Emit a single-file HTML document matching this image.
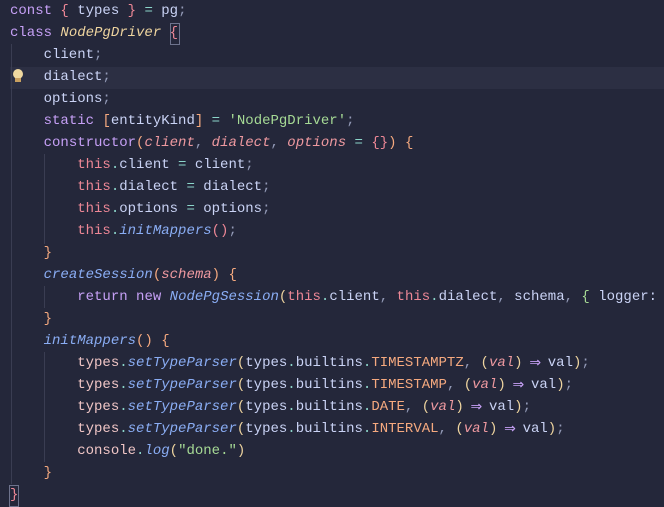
<!DOCTYPE html>
<html><head><meta charset="utf-8"><style>
html,body{margin:0;padding:0;background:#24273a;width:664px;height:507px;overflow:hidden}
.code{position:absolute;left:10px;top:0;font-family:"Liberation Mono",monospace;font-size:14px;color:#cad3f5}
.l{height:22px;line-height:22px;white-space:pre}
.hl{position:absolute;left:10px;top:67px;width:654px;height:22px;background:#2c2f43}
.g{position:absolute;width:1px;background:#3a3d52}
.k{color:#c6a0f6}.y{color:#eed49f;font-style:italic}.r{color:#ed8796}.p{color:#ee99a0;font-style:italic}
.b{color:#8aadf4;font-style:italic}.s{color:#a6da95}.o{color:#f5a97f}.t{color:#8bd5ca}.d{color:#939ab7}.f{color:#f0c6c6}.n{color:#eed49f}
.a{color:#c6a0f6;display:inline-block;width:8.4px;text-align:center;font-family:"DejaVu Sans",sans-serif;font-size:14px;line-height:22px;vertical-align:top;overflow:visible}
.a span{display:inline-block;margin-left:-4px;margin-right:-4px}
.bulb{position:absolute;left:13px;top:69px;width:10px;height:10px;border-radius:50%;background:#f0d9a0}
.bulb2{position:absolute;left:15px;top:78px;width:6px;height:4px;background:#c9a060}
.box{position:absolute;border:1px solid #6e738d}
</style></head><body>
<div class="hl"></div>
<div class="g" style="left:11px;top:44px;height:440px"></div>
<div class="g" style="left:44px;top:154px;height:90px"></div>
<div class="g" style="left:44px;top:286px;height:22px"></div>
<div class="g" style="left:44px;top:352px;height:110px"></div>
<div class="bulb"></div><div class="bulb2"></div>
<div class="box" style="left:170px;top:23px;width:8px;height:20px"></div>
<div class="box" style="left:9px;top:485px;width:8px;height:20px"></div>
<div class="code"><div class="l"><span class="k">const</span> <span class="r">{</span> types <span class="r">}</span> <span class="t">=</span> pg<span class="d">;</span></div><div class="l"><span class="k">class</span> <span class="y">NodePgDriver</span> <span class="r">{</span></div><div class="l">    client<span class="d">;</span></div><div class="l">    dialect<span class="d">;</span></div><div class="l">    options<span class="d">;</span></div><div class="l">    <span class="k">static</span> <span class="o">[</span>entityKind<span class="o">]</span> <span class="t">=</span> <span class="s">'NodePgDriver'</span><span class="d">;</span></div><div class="l">    <span class="k">constructor</span><span class="o">(</span><span class="p">client</span><span class="d">,</span> <span class="p">dialect</span><span class="d">,</span> <span class="p">options</span> <span class="t">=</span> <span class="r">{}</span><span class="o">)</span> <span class="o">{</span></div><div class="l">        <span class="r">this</span><span class="t">.</span>client <span class="t">=</span> client<span class="d">;</span></div><div class="l">        <span class="r">this</span><span class="t">.</span>dialect <span class="t">=</span> dialect<span class="d">;</span></div><div class="l">        <span class="r">this</span><span class="t">.</span>options <span class="t">=</span> options<span class="d">;</span></div><div class="l">        <span class="r">this</span><span class="t">.</span><span class="b">initMappers</span><span class="r">()</span><span class="d">;</span></div><div class="l">    <span class="o">}</span></div><div class="l">    <span class="b">createSession</span><span class="o">(</span><span class="p">schema</span><span class="o">)</span> <span class="o">{</span></div><div class="l">        <span class="k">return</span> <span class="k">new</span> <span class="b">NodePgSession</span><span class="n">(</span><span class="r">this</span><span class="t">.</span>client<span class="d">,</span> <span class="r">this</span><span class="t">.</span>dialect<span class="d">,</span> schema<span class="d">,</span> <span class="s">{</span> logger:</div><div class="l">    <span class="o">}</span></div><div class="l">    <span class="b">initMappers</span><span class="o">()</span> <span class="o">{</span></div><div class="l">        <span class="f">types</span><span class="t">.</span><span class="b">setTypeParser</span><span class="n">(</span>types<span class="t">.</span>builtins<span class="t">.</span><span class="o">TIMESTAMPTZ</span><span class="d">,</span> <span class="n">(</span><span class="p">val</span><span class="n">)</span> <span class="a"><span>⇒</span></span> val<span class="n">)</span><span class="d">;</span></div><div class="l">        <span class="f">types</span><span class="t">.</span><span class="b">setTypeParser</span><span class="n">(</span>types<span class="t">.</span>builtins<span class="t">.</span><span class="o">TIMESTAMP</span><span class="d">,</span> <span class="n">(</span><span class="p">val</span><span class="n">)</span> <span class="a"><span>⇒</span></span> val<span class="n">)</span><span class="d">;</span></div><div class="l">        <span class="f">types</span><span class="t">.</span><span class="b">setTypeParser</span><span class="n">(</span>types<span class="t">.</span>builtins<span class="t">.</span><span class="o">DATE</span><span class="d">,</span> <span class="n">(</span><span class="p">val</span><span class="n">)</span> <span class="a"><span>⇒</span></span> val<span class="n">)</span><span class="d">;</span></div><div class="l">        <span class="f">types</span><span class="t">.</span><span class="b">setTypeParser</span><span class="n">(</span>types<span class="t">.</span>builtins<span class="t">.</span><span class="o">INTERVAL</span><span class="d">,</span> <span class="n">(</span><span class="p">val</span><span class="n">)</span> <span class="a"><span>⇒</span></span> val<span class="n">)</span><span class="d">;</span></div><div class="l">        <span class="f">console</span><span class="t">.</span><span class="b">log</span><span class="n">(</span><span class="s">"done."</span><span class="n">)</span></div><div class="l">    <span class="o">}</span></div><div class="l"><span class="r">}</span></div></div>
</body></html>
